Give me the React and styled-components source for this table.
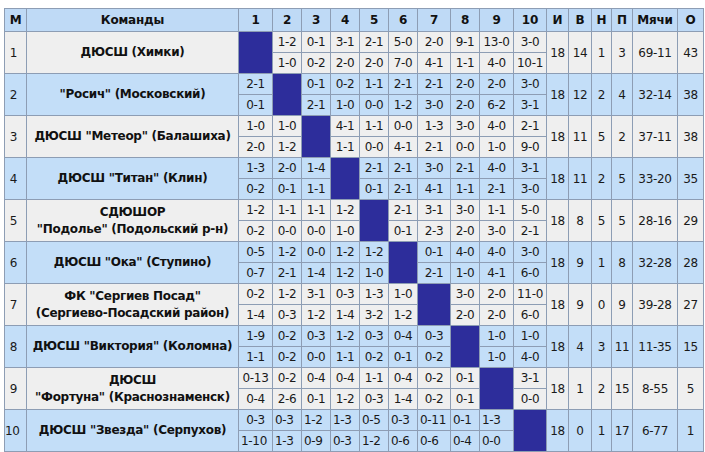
import React from 'react';
import styled, { createGlobalStyle } from 'styled-components';

const teams = [
  {
    name: ['ДЮСШ (Химки)'],
    top: ['', '1-2', '0-1', '3-1', '2-1', '5-0', '2-0', '9-1', '13-0', '3-0'],
    bottom: ['', '1-0', '0-2', '2-0', '2-0', '7-0', '4-1', '1-1', '4-0', '10-1'],
    stats: ['18', '14', '1', '3', '69-11', '43'],
  },
  {
    name: ['"Росич" (Московский)'],
    top: ['2-1', '', '0-1', '0-2', '1-1', '2-1', '2-1', '2-0', '2-0', '3-0'],
    bottom: ['0-1', '', '2-1', '1-0', '0-0', '1-2', '3-0', '2-0', '6-2', '3-1'],
    stats: ['18', '12', '2', '4', '32-14', '38'],
  },
  {
    name: ['ДЮСШ "Метеор" (Балашиха)'],
    top: ['1-0', '1-0', '', '4-1', '1-1', '0-0', '1-3', '3-0', '4-0', '2-1'],
    bottom: ['2-0', '1-2', '', '1-1', '0-0', '4-1', '2-1', '0-0', '1-0', '9-0'],
    stats: ['18', '11', '5', '2', '37-11', '38'],
  },
  {
    name: ['ДЮСШ "Титан" (Клин)'],
    top: ['1-3', '2-0', '1-4', '', '2-1', '2-1', '3-0', '2-1', '4-0', '3-1'],
    bottom: ['0-2', '0-1', '1-1', '', '0-1', '2-1', '4-1', '1-1', '2-1', '3-0'],
    stats: ['18', '11', '2', '5', '33-20', '35'],
  },
  {
    name: ['СДЮШОР', '"Подолье" (Подольский р-н)'],
    top: ['1-2', '1-1', '1-1', '1-2', '', '2-1', '3-1', '3-0', '1-1', '5-0'],
    bottom: ['0-2', '0-0', '0-0', '1-0', '', '0-1', '2-3', '2-0', '3-0', '2-1'],
    stats: ['18', '8', '5', '5', '28-16', '29'],
  },
  {
    name: ['ДЮСШ "Ока" (Ступино)'],
    top: ['0-5', '1-2', '0-0', '1-2', '1-2', '', '0-1', '4-0', '4-0', '3-0'],
    bottom: ['0-7', '2-1', '1-4', '1-2', '1-0', '', '2-1', '1-0', '4-1', '6-0'],
    stats: ['18', '9', '1', '8', '32-28', '28'],
  },
  {
    name: ['ФК "Сергиев Посад"', '(Сергиево-Посадский район)'],
    top: ['0-2', '1-2', '3-1', '0-3', '1-3', '1-0', '', '3-0', '2-0', '11-0'],
    bottom: ['1-4', '0-3', '1-2', '1-4', '3-2', '1-2', '', '2-0', '2-0', '6-0'],
    stats: ['18', '9', '0', '9', '39-28', '27'],
  },
  {
    name: ['ДЮСШ "Виктория" (Коломна)'],
    top: ['1-9', '0-2', '0-3', '1-2', '0-3', '0-4', '0-3', '', '1-0', '1-0'],
    bottom: ['1-1', '0-2', '0-0', '1-1', '0-2', '0-1', '0-2', '', '1-0', '4-0'],
    stats: ['18', '4', '3', '11', '11-35', '15'],
  },
  {
    name: ['ДЮСШ', '"Фортуна" (Краснознаменск)'],
    top: ['0-13', '0-2', '0-4', '0-4', '1-1', '0-4', '0-2', '0-1', '', '3-1'],
    bottom: ['0-4', '2-6', '0-1', '1-2', '0-3', '1-4', '0-2', '0-1', '', '0-0'],
    stats: ['18', '1', '2', '15', '8-55', '5'],
  },
  {
    name: ['ДЮСШ "Звезда" (Серпухов)'],
    top: ['0-3', '0-3', '1-2', '1-3', '0-5', '0-3', '0-11', '0-1', '1-3', ''],
    bottom: ['1-10', '1-3', '0-9', '0-3', '1-2', '0-6', '0-6', '0-4', '0-0', ''],
    stats: ['18', '0', '1', '17', '6-77', '1'],
    loose: true,
  },
];

const widths = [22, 212, 34, 29, 29, 29, 29, 29, 33, 29, 34, 33, 22, 23, 20, 21, 45, 26];
const heads = ['М', 'Команды', '1', '2', '3', '4', '5', '6', '7', '8', '9', '10', 'И', 'В', 'Н', 'П', 'Мячи', 'О'];

const GlobalStyle = createGlobalStyle`
  html, body {
    margin: 0;
    padding: 0;
    background: #ffffff;
  }
  body {
    font-family: "DejaVu Sans", Verdana, sans-serif;
  }
`;

const Page = styled.div`
  padding: 8px 0 0 4px;
`;

const Table = styled.table`
  width: 699px;
  table-layout: fixed;
  border-collapse: collapse;
  font-size: 12px;
  color: #1a1a1a;
`;

const HeadRow = styled.tr`
  height: 23px;
  background: #bfdaf6;
`;

const HeadCell = styled.th`
  border: 1px solid #8d9db4;
  padding: 0;
  font-weight: bold;
  text-align: center;
  color: #111111;
  letter-spacing: -0.2px;
`;

const Row = styled.tr`
  height: 21px;
  background: ${(p) => (p.$alt ? '#c3def8' : '#efefef')};
`;

const NumCell = styled.td`
  border: 1px solid #8d9db4;
  padding: 0 9px 0 0;
  text-align: right;
  letter-spacing: -0.3px;
`;

const NameCell = styled.td`
  border: 1px solid #8d9db4;
  padding: 0 2px;
  text-align: center;
  font-weight: bold;
  line-height: 17px;
  color: #111111;
  white-space: nowrap;
  letter-spacing: -0.3px;
`;

const ScoreCell = styled.td`
  border: 1px solid #8d9db4;
  padding: ${(p) => (p.$loose ? '0 0 0 2px' : '0')};
  text-align: ${(p) => (p.$loose ? 'left' : 'center')};
  white-space: nowrap;
  letter-spacing: -0.3px;
  background: ${(p) => (p.$diag ? '#2d2d9b' : 'transparent')};
`;

const StatCell = styled.td`
  border: 1px solid #8d9db4;
  padding: 0;
  text-align: center;
  white-space: nowrap;
  letter-spacing: -0.3px;
`;

const TeamRows = ({ team, index }) => {
  const alt = index % 2 === 1;
  return (
    <>
      <Row $alt={alt}>
        <NumCell rowSpan={2}>{index + 1}</NumCell>
        <NameCell rowSpan={2}>
          {team.name.map((line, i) => (
            <React.Fragment key={i}>
              {i > 0 && <br />}
              {line}
            </React.Fragment>
          ))}
        </NameCell>
        {team.top.map((s, i) =>
          i === index ? (
            <ScoreCell key={i} rowSpan={2} $diag />
          ) : (
            <ScoreCell key={i} $loose={team.loose && i > 0}>{s}</ScoreCell>
          )
        )}
        {team.stats.map((s, i) => (
          <StatCell key={i} rowSpan={2}>{s}</StatCell>
        ))}
      </Row>
      <Row $alt={alt}>
        {team.bottom.map((s, i) =>
          i === index ? null : (
            <ScoreCell key={i} $loose={team.loose}>{s}</ScoreCell>
          )
        )}
      </Row>
    </>
  );
};

export default function App() {
  return (
    <>
      <GlobalStyle />
      <Page>
        <Table>
          <colgroup>
            {widths.map((w, i) => (
              <col key={i} style={{ width: w }} />
            ))}
          </colgroup>
          <thead>
            <HeadRow>
              {heads.map((h) => (
                <HeadCell key={h}>{h}</HeadCell>
              ))}
            </HeadRow>
          </thead>
          <tbody>
            {teams.map((t, i) => (
              <TeamRows key={i} team={t} index={i} />
            ))}
          </tbody>
        </Table>
      </Page>
    </>
  );
}
